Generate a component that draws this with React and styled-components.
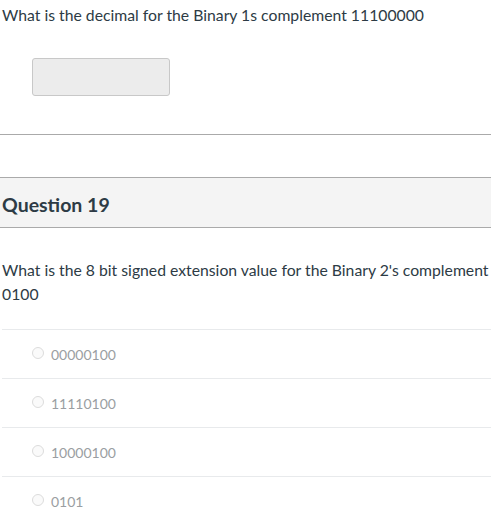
import React from 'react';
import styled, { createGlobalStyle } from 'styled-components';

const Global = createGlobalStyle`
  body {
    margin: 0;
    background: #fff;
    font-family: Lato, "Open Sans", sans-serif;
    color: #2d3b45;
  }
`;

const Page = styled.div`
  width: 491px;
  overflow: hidden;
`;

const QuestionText = styled.div`
  font-size: 15.75px;
  line-height: 24px;
  padding: ${p => p.pad || '0 2px'};
`;

const AnswerArea = styled.div`
  padding: 31px 0 38px 32px;
  border-bottom: 1px solid #aaaaaa;
`;

const TextInput = styled.div`
  width: 136px;
  height: 36px;
  background: #ececec;
  border: 1px solid #c8c8c8;
  border-radius: 3px;
`;

const Header = styled.div`
  margin-top: 42px;
  height: 49px;
  box-sizing: border-box;
  height: 51px;
  display: flex;
  align-items: center;
  padding: 3px 2px 0;
  background: #f4f4f4;
  border-top: 1px solid #aaaaaa;
  border-bottom: 1px solid #aaaaaa;
  font-size: 19.5px;
  font-weight: 700;
`;

const Answers = styled.div`
  margin-left: 2px;
  margin-top: 23px;
`;

const Answer = styled.label`
  display: flex;
  align-items: center;
  height: 48px;
  padding-left: 30px;
  border-top: 1px solid #e8eaec;
  font-size: 14px;
  color: #9a9ea2;
`;

const Radio = styled.span`
  width: 12px;
  height: 12px;
  box-sizing: border-box;
  border-radius: 50%;
  border: 1px solid #dcdcdc;
  background: #fafafa;
  margin-right: 7px;
  margin-top: -2px;
`;

const options = ['00000100', '11110100', '10000100', '0101'];

export default function App() {
  return (
    <Page>
      <Global />
      <QuestionText pad="3px 2px 0">
        What is the decimal for the Binary 1s complement 11100000
      </QuestionText>
      <AnswerArea>
        <TextInput />
      </AnswerArea>
      <Header>Question 19</Header>
      <QuestionText pad="30px 2px 0">
        What is the 8 bit signed extension value for the Binary 2's complement 0100
      </QuestionText>
      <Answers>
        {options.map(o => (
          <Answer key={o}>
            <Radio />
            {o}
          </Answer>
        ))}
      </Answers>
    </Page>
  );
}
